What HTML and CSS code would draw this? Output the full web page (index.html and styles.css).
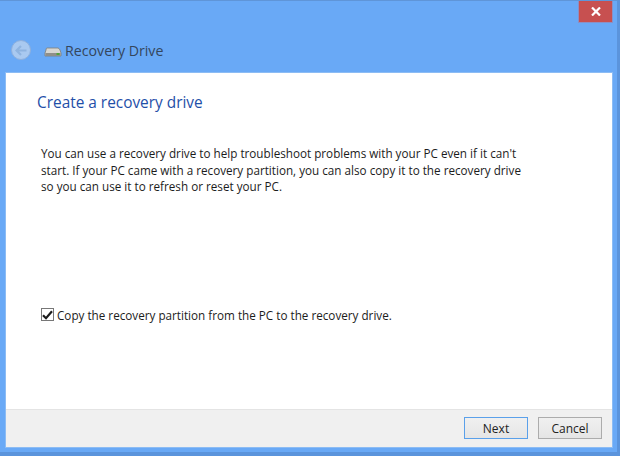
FILE: index.html
```html
<!DOCTYPE html>
<html lang="en">
<head>
<meta charset="utf-8">
<title>Recovery Drive</title>
<link rel="stylesheet" href="styles.css">
</head>
<body>
<div class="window">
  <div class="titlebar">
    <div class="close">
      <svg class="close-icon" width="10" height="9" viewBox="0 0 10 9"><path d="M1 .5 L9 8.5 M9 .5 L1 8.5" stroke="#fff" stroke-width="2.2" fill="none"/></svg>
    </div>
  </div>
  <div class="nav">
    <div class="back">
      <svg width="12" height="11" viewBox="0 0 12 11"><path d="M6 1 L1.5 5.5 L6 10 M2 5.5 H11.5" stroke="#8fb4e0" stroke-width="2.2" fill="none"/></svg>
    </div>
    <svg class="drive" width="18" height="10" viewBox="0 0 18 10">
      <path d="M3 1 H14 Q15 1 16 3 L17 6 V9 H1 V6 L2 3 Q2 1 3 1 Z" fill="#d6d6d2" stroke="#7d7d78" stroke-width=".8"/>
      <rect x="1.4" y="6" width="15.2" height="3" fill="#8f8f8a"/>
      <rect x="12.5" y="6" width="3" height="2" fill="#4fa33a"/>
    </svg>
    <span class="nav-title">Recovery Drive</span>
  </div>
  <div class="panel">
    <div class="content">
      <h1 class="heading">Create a recovery drive</h1>
      <p class="intro">You can use a recovery drive to help troubleshoot problems with your PC even if it can't<br>start. If your PC came with a recovery partition, you can also copy it to the recovery drive<br>so you can use it to refresh or reset your PC.</p>
      <label class="check-row">
        <span class="checkbox">
          <svg width="11" height="10" viewBox="0 0 11 10"><path d="M1 5.2 L4 8.2 L10 1.2" stroke="#1c1c1c" stroke-width="2.2" fill="none"/></svg>
        </span>
        <span>Copy the recovery partition from the PC to the recovery drive.</span>
      </label>
    </div>
    <div class="footer">
      <button class="btn btn-default">Next</button>
      <button class="btn">Cancel</button>
    </div>
  </div>
</div>
</body>
</html>
```

FILE: styles.css
```css
html, body {
  margin: 0;
  padding: 0;
}
body {
  width: 620px;
  height: 456px;
  overflow: hidden;
  font-family: "Open Sans", "Noto Sans", sans-serif;
}
.window {
  box-sizing: border-box;
  width: 620px;
  height: 456px;
  background: #69a9f6;
  border-top: 1px solid #5f95d8;
  border-right: 3px solid #5b94dc;
  border-bottom: 4px solid #5b94dc;
  padding: 0 5px 5px 6px;
  display: flex;
  flex-direction: column;
}
.titlebar {
  display: flex;
  justify-content: flex-end;
  height: 22px;
  flex: none;
}
.close {
  width: 33px;
  height: 21px;
  background: #c75050;
  box-shadow: 0 0 0 1px #8c8fc4;
  clip-path: inset(0 -1px -1px -1px);
  display: flex;
  align-items: center;
  justify-content: center;
}
.close-icon {
  display: block;
}
.nav {
  height: 50px;
  flex: none;
  display: flex;
  align-items: center;
  padding-top: 4px;
  box-sizing: border-box;
}
.back {
  width: 18px;
  height: 18px;
  border-radius: 50%;
  background: #a9c9f0;
  border: 1px solid #8fb0dc;
  margin-left: 5px;
  display: flex;
  align-items: center;
  justify-content: center;
  box-sizing: content-box;
  flex: none;
}
.drive {
  margin-left: 13px;
  margin-top: 4px;
  flex: none;
}
.nav-title {
  margin-left: 3px;
  font-size: 14.2px;
  color: #34465c;
}
.panel {
  flex: 1;
  display: flex;
  flex-direction: column;
  background: #fff;
  box-shadow: 0 0 0 1px #8cbcf4;
}
.content {
  flex: 1;
  padding: 0 0 0 31px;
  display: flex;
  flex-direction: column;
}
.heading {
  margin: 19px 0 0;
  font-size: 15.4px;
  line-height: 22px;
  font-weight: 400;
  color: #1f4fa8;
}
.intro {
  margin: 31px 0 0 4px;
  font-size: 11.7px;
  line-height: 16.5px;
  color: #1c1c1c;
}
.check-row {
  margin: 112px 0 0 4px;
  display: flex;
  align-items: center;
  gap: 3px;
  font-size: 11.7px;
  line-height: 16px;
  color: #1c1c1c;
}
.checkbox {
  box-sizing: border-box;
  width: 13px;
  height: 13px;
  border: 1px solid #777;
  background: #fff;
  display: flex;
  align-items: center;
  justify-content: center;
}
.footer {
  height: 38px;
  flex: none;
  box-sizing: border-box;
  background: #f0f0f0;
  border-top: 1px solid #e4e4e4;
  display: flex;
  justify-content: flex-end;
  align-items: flex-start;
  gap: 10px;
  padding: 7px 10px 0 0;
}
.btn {
  box-sizing: border-box;
  width: 64px;
  height: 22px;
  padding: 0;
  font-family: inherit;
  font-size: 12px;
  color: #222;
  background: linear-gradient(#f0f0f0, #e5e5e5);
  border: 1px solid #acacac;
}
.btn-default {
  border-color: #5aa0ea;
}
```
